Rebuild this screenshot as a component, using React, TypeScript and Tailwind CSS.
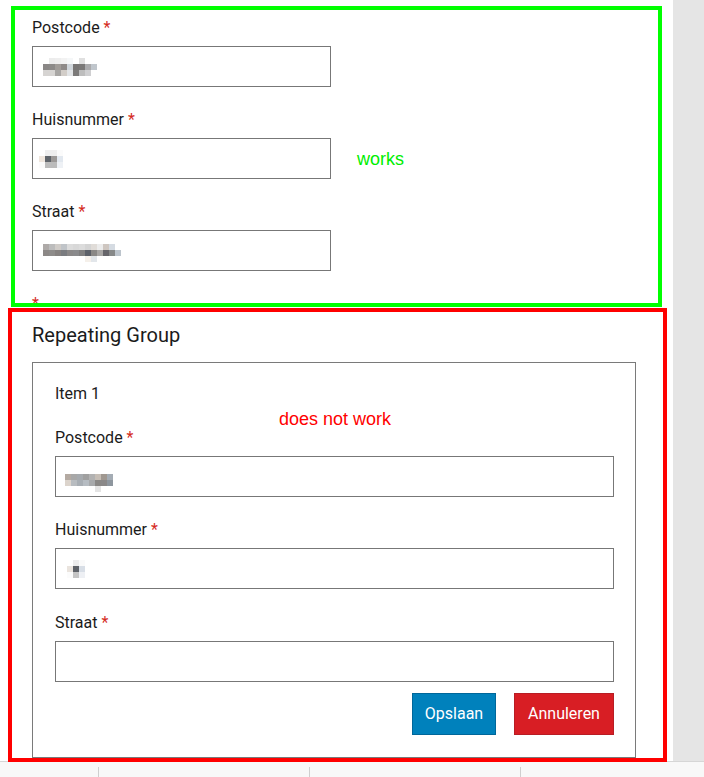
import React from "react"

type MosaicProps = { rows: string[][]; cell: number; className?: string }

// pixelated (censored) field values
function Mosaic({ rows, cell, className }: MosaicProps) {
  const w = rows[0].length * cell
  const h = rows.length * cell
  return (
    <svg width={w} height={h} className={className} shapeRendering="crispEdges">
      {rows.map((row, y) =>
        row.map((c, x) => <rect key={`${x}-${y}`} x={x * cell} y={y * cell} width={cell} height={cell} fill={c} />)
      )}
    </svg>
  )
}

const postcodeA = [
  ["#ffffff", "#ececec", "#eeeeee", "#f2f2f2", "#f5f7f8", "#ffffff", "#e0e0e0", "#ffffff", "#ffffff"],
  ["#8a8786", "#8c8a88", "#a09c98", "#8e8a88", "#cfd5da", "#767473", "#7a7877", "#aaaaac", "#c0c6cc"],
  ["#d6d4d2", "#d6d4d2", "#a8a6a4", "#d2cdc8", "#e2e4e6", "#7c7a79", "#bdbdbd", "#cfcfd1", "#ffffff"],
]
const huisA = [
  ["#ffffff", "#eeeeee", "#eeeeee", "#fbfbfb"],
  ["#efe6dd", "#5f646a", "#9b9896", "#e2e8ef"],
  ["#fbfbfb", "#bcbcbc", "#bbbbbb", "#eef1f5"],
]
const straatA = [
  ["#aeaaa8", "#bcbcbc", "#d0ccc8", "#c0c4c8", "#dcdcdc", "#d8d8d8", "#dcdcdc", "#d4d4d4", "#e0dcd8", "#ececec", "#cec6c0", "#d5dbe2", "#ffffff"],
  ["#8c8886", "#8e8c8a", "#868280", "#7a7c80", "#8a8888", "#8a8a8c", "#7f7e7e", "#5c6068", "#8a8886", "#a8a6a4", "#66656a", "#868888", "#bcc4cc"],
  ["#ffffff", "#ffffff", "#ffffff", "#ffffff", "#ffffff", "#ffffff", "#ffffff", "#f5f0ea", "#e2e6ea", "#ffffff", "#ffffff", "#ffffff", "#ffffff"],
]
const postcodeB = [
  ["#b4aaa2", "#a8a8a8", "#a6aaae", "#a0a0a0", "#b2b2b2", "#c6beb6", "#a09890", "#a4acb4", "#ffffff"],
  ["#dcd4cc", "#b8bcc0", "#a8aeb4", "#b6bcc2", "#a8aaac", "#8a8886", "#8a8888", "#8e969e", "#ffffff"],
  ["#ffffff", "#ffffff", "#ffffff", "#ffffff", "#ffffff", "#e4e4e4", "#ffffff", "#ffffff", "#ffffff"],
]
const huisB = [
  ["#ffffff", "#ececec", "#fafafa"],
  ["#eae4de", "#5e6268", "#d8dee6"],
  ["#fbfbfb", "#c4c4c4", "#eef0f4"],
]

function Label({ text }: { text: string }) {
  return (
    <div className="mb-[6px] h-[25px] pt-px text-base leading-6 text-[#1b1b1b]">
      {text} <span className="text-[#d52b1e]">*</span>
    </div>
  )
}

function Field({ label, value, wide }: { label: string; value?: React.ReactNode; wide?: boolean }) {
  return (
    <div className="mb-5">
      <Label text={label} />
      <div
        className={`flex h-[41px] items-center border border-[#777] bg-white pl-[11px] ${wide ? "w-full" : "w-[299px]"}`}
      >
        {value}
      </div>
    </div>
  )
}

export default function App() {
  return (
    <div className="relative flex h-[777px] flex-col overflow-hidden bg-white" style={{ fontFamily: "Roboto, 'Open Sans', sans-serif" }}>
      <div className="flex flex-1">
        <main className="w-[673px] bg-white px-8 pt-[15px]">
          <Field label="Postcode" value={<Mosaic rows={postcodeA} cell={6} className="-ml-[1px]" />} />
          <Field label="Huisnummer" value={<Mosaic rows={huisA} cell={6} className="-ml-[5px]" />} />
          <Field label="Straat" value={<Mosaic rows={straatA} cell={6} className="-ml-[1px] mt-[4px]" />} />
          <div className="h-6 pt-px text-base leading-6 text-[#d52b1e]">*</div>

          <h2 className="mt-[5px] h-7 pt-px text-xl leading-7 text-[#1b1b1b]">Repeating Group</h2>

          <fieldset className="mt-[14px] w-[604px] border border-[#7a7a7a] pb-[22px] pl-[22px] pr-[21px] pt-[18px]">
            <div className="mb-5 h-6 pt-px text-base leading-6 text-[#1b1b1b]">Item 1</div>
            <Field label="Postcode" wide value={<Mosaic rows={postcodeB} cell={6} className="ml-[-2px] mt-[12px]" />} />
            <Field label="Huisnummer" wide value={<Mosaic rows={huisB} cell={6} className="ml-[0px]" />} />
            <div className="mb-[11px] pt-px">
              <Label text="Straat" />
              <div className="h-[41px] w-full border border-[#777] bg-white" />
            </div>
            <div className="flex justify-end gap-[18px]">
              <button className="h-[42px] w-[84px] border border-[#00679a] bg-[#0081bc] text-base text-white">
                Opslaan
              </button>
              <button className="h-[42px] w-[100px] border border-[#b81d24] bg-[#d81e24] text-base text-white">
                Annuleren
              </button>
            </div>
          </fieldset>
        </main>
        <div className="flex-1 bg-[#e5e5e5]" />
      </div>

      <footer className="flex h-4 border-t border-[#d6d6d6] bg-[#f8f8f8] pt-[5px]">
        <div className="w-[98px]" />
        <div className="w-[211px] border-l border-[#cfcfcf]" />
        <div className="w-[211px] border-l border-[#cfcfcf]" />
        <div className="flex-1 border-l border-[#cfcfcf]" />
      </footer>

      {/* annotations drawn over the screenshot */}
      <div className="pointer-events-none absolute left-[11px] top-[6px] h-[301px] w-[651px] border-4 border-[#00ff00]" />
      <div className="pointer-events-none absolute left-[8px] top-[308px] h-[454px] w-[659px] border-4 border-[#ff0000]" />
      <div
        className="pointer-events-none absolute left-[357px] top-[147px] text-[18px] leading-[24px] text-[#00ee00]"
        style={{ fontFamily: "'Liberation Sans', Arial, sans-serif" }}
      >
        works
      </div>
      <div
        className="pointer-events-none absolute left-[279px] top-[407px] text-[18px] leading-[24px] text-[#ff0000]"
        style={{ fontFamily: "'Liberation Sans', Arial, sans-serif" }}
      >
        does not work
      </div>
    </div>
  )
}
